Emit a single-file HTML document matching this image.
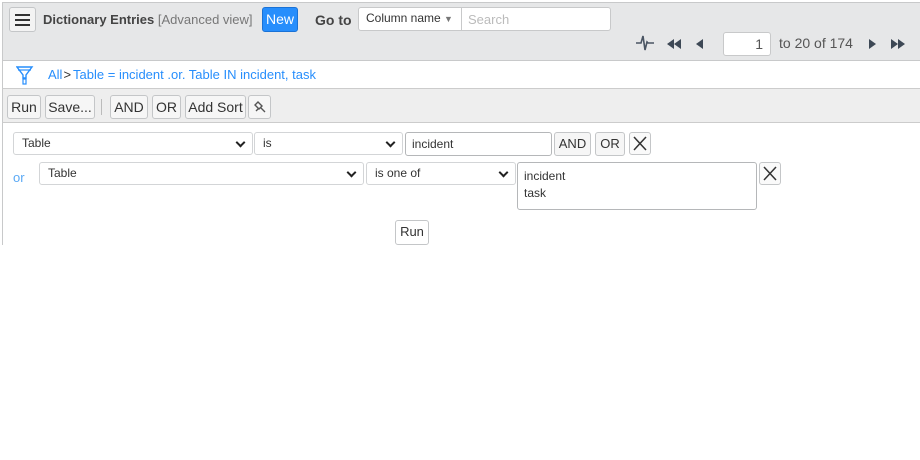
<!DOCTYPE html>
<html><head><meta charset="utf-8"><style>
*{box-sizing:border-box;margin:0;padding:0}
body{width:920px;height:460px;background:#fff;font-family:"Liberation Sans",Arial,sans-serif;font-size:13px;color:#333;position:relative;overflow:hidden}
.a{position:absolute;white-space:nowrap}
.btn{position:absolute;white-space:nowrap;border:1px solid #c4c6c8;border-radius:3px;background:#f6f6f6;font-size:14px;color:#333;text-align:center;line-height:22px;height:24px}
.sel{position:absolute;border:1px solid #d3d5d7;border-radius:3px;background:#fff;height:23px;font-size:12px;line-height:21px;padding-left:8px;color:#333}
.chev{position:absolute;right:8px;top:6px;width:7px;height:7px;border-right:2px solid #222;border-bottom:2px solid #222;transform:rotate(45deg)}
.x{position:absolute;border:1px solid #c4c6c8;border-radius:3px;background:#fafafa;width:22px;height:23px}
</style></head><body>
<div class="a" style="left:2px;top:2px;width:918px;height:59px;background:#e6e7e8;border-top:1px solid #c8c9ca;border-bottom:1px solid #c8c9ca;border-left:1px solid #c8c9ca"></div>
<div class="a" style="left:2px;top:61px;width:918px;height:27px;background:#fff;border-left:1px solid #c8c9ca"></div>
<div class="a" style="left:2px;top:88px;width:918px;height:35px;background:#eee;border-top:1px solid #ccc;border-bottom:1px solid #ccc;border-left:1px solid #c8c9ca"></div>
<div class="a" style="left:2px;top:123px;width:1px;height:122px;background:#c8c9ca"></div>

<div class="btn" style="left:9px;top:7px;width:27px;height:25px;background:#f3f3f3">
<svg width="15" height="12" style="margin-top:6px" viewBox="0 0 15 12"><rect y="0" width="15" height="2" fill="#333"/><rect y="5" width="15" height="2" fill="#333"/><rect y="10" width="15" height="2" fill="#333"/></svg></div>
<div class="a" style="left:43px;top:12px;font-size:13px;font-weight:bold;color:#444">Dictionary Entries <span style="font-weight:normal;color:#777">[Advanced view]</span></div>
<div class="a" style="left:262px;top:7px;width:36px;height:25px;background:#278efc;border:1px solid #1a72d6;border-radius:3px;color:#fff;font-size:14px;text-align:center;line-height:23px">New</div>
<div class="a" style="left:315px;top:12px;font-size:14px;font-weight:bold;color:#444">Go to</div>
<div class="a" style="left:358px;top:7px;width:104px;height:24px;background:#fff;border:1px solid #c8c9ca;border-radius:3px 0 0 3px;font-size:12px;line-height:20px;padding-left:7px">Column name <span style="font-size:9px;color:#777">▼</span></div>
<div class="a" style="left:461px;top:7px;width:150px;height:24px;background:#fff;border:1px solid #c8c9ca;border-radius:0 3px 3px 0;font-size:13px;line-height:24px;padding-left:6px;color:#bbb">Search</div>

<svg class="a" style="left:636px;top:34px" width="20" height="18" viewBox="0 0 20 18"><path d="M0 9H5L7 2L9 16L11 8L12 9H18" fill="none" stroke="#4a5563" stroke-width="1.6"/></svg>
<svg class="a" style="left:667px;top:39px" width="16" height="10" viewBox="0 0 16 10"><path d="M0 5L7 0V10ZM7 5L14 0V10Z" fill="#3d4855"/></svg>
<svg class="a" style="left:695px;top:39px" width="10" height="10" viewBox="0 0 10 10"><path d="M1 5L8 0V10Z" fill="#3d4855"/></svg>
<div class="a" style="left:723px;top:32px;width:48px;height:24px;background:#fff;border:1px solid #c8c9ca;border-radius:3px;text-align:right;padding-right:7px;line-height:22px;font-size:14px;color:#555">1</div>
<div class="a" style="left:779px;top:35px;font-size:14px;color:#555">to 20 of 174</div>
<svg class="a" style="left:868px;top:39px" width="10" height="10" viewBox="0 0 10 10"><path d="M1 0L8 5L1 10Z" fill="#3d4855"/></svg>
<svg class="a" style="left:891px;top:39px" width="16" height="10" viewBox="0 0 16 10"><path d="M0 0L7 5L0 10ZM7 0L14 5L7 10Z" fill="#3d4855"/></svg>

<svg class="a" style="left:16px;top:66px" width="18" height="20" viewBox="0 0 18 20"><path d="M1 1H16L10 9V12H7V9Z" fill="none" stroke="#278efc" stroke-width="1.4"/><path d="M2 4H15" stroke="#278efc" stroke-width="1.2"/><rect x="7" y="13" width="3" height="5" fill="none" stroke="#278efc" stroke-width="1.2"/></svg>
<div class="a" style="left:48px;top:67px;font-size:13px;color:#278efc">All<span style="color:#333;margin:0 2px 0 1px">&gt;</span>Table = incident .or. Table IN incident, task</div>

<div class="btn" style="left:7px;top:95px;width:34px">Run</div>
<div class="btn" style="left:45px;top:95px;width:50px">Save...</div>
<div class="a" style="left:101px;top:99px;width:1px;height:16px;background:#bbb"></div>
<div class="btn" style="left:110px;top:95px;width:38px">AND</div>
<div class="btn" style="left:152px;top:95px;width:29px">OR</div>
<div class="btn" style="left:185px;top:95px;width:61px">Add Sort</div>
<div class="btn" style="left:248px;top:95px;width:23px"><svg width="14" height="14" viewBox="0 0 14 14" style="margin-top:4px"><path d="M2 5L5 2L9 6L6 9ZM7 7L12 12M3 11L5 9" stroke="#555" stroke-width="1.4" fill="none"/></svg></div>

<div class="sel" style="left:13px;top:132px;width:240px">Table<div class="chev"></div></div>
<div class="sel" style="left:254px;top:132px;width:149px">is<div class="chev"></div></div>
<div class="a" style="left:405px;top:132px;width:147px;height:24px;border:1px solid #b5b7b9;border-radius:3px;font-size:12px;line-height:23px;padding-left:6px">incident</div>
<div class="btn" style="left:554px;top:132px;width:37px;font-size:13px">AND</div>
<div class="btn" style="left:595px;top:132px;width:30px;font-size:13px">OR</div>
<div class="x" style="left:629px;top:132px"><svg width="20" height="21" viewBox="0 0 20 21"><path d="M4 4L16 17M16 4L4 17" stroke="#333" stroke-width="1.5"/></svg></div>

<div class="a" style="left:13px;top:170px;font-size:13px;color:#5aa9f5">or</div>
<div class="sel" style="left:39px;top:162px;width:325px">Table<div class="chev"></div></div>
<div class="sel" style="left:366px;top:162px;width:150px">is one of<div class="chev"></div></div>
<div class="a" style="left:517px;top:162px;width:240px;height:48px;border:1px solid #b5b7b9;border-radius:3px;font-size:12px;line-height:17px;padding:5px 6px">incident<br>task</div>
<div class="x" style="left:759px;top:162px"><svg width="20" height="21" viewBox="0 0 20 21"><path d="M4 4L16 17M16 4L4 17" stroke="#333" stroke-width="1.5"/></svg></div>

<div class="btn" style="left:395px;top:220px;width:34px;height:25px;background:#fff;font-size:13px">Run</div>
</body></html>
